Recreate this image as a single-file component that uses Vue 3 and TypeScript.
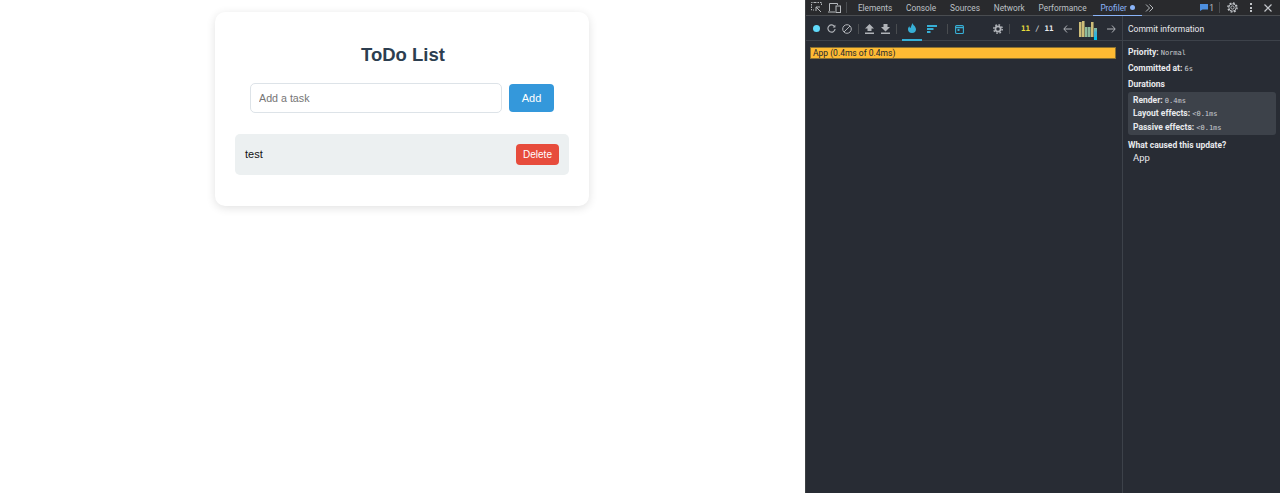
<script setup lang="ts">
const tabs: string[] = ['Elements', 'Console', 'Sources', 'Network', 'Performance']
const bars: { h: number; c: string }[] = [
  { h: 15, c: '#cdbd78' },
  { h: 16, c: '#cdbd78' },
  { h: 10, c: '#8dbb9c' },
  { h: 10, c: '#8dbb9c' },
  { h: 15, c: '#cdbd78' }
]
</script>

<template>
  <div class="page">
    <main class="app">
      <section class="card">
        <h1>ToDo List</h1>
        <div class="entry">
          <input class="task-input" type="text" placeholder="Add a task" />
          <button class="add">Add</button>
        </div>
        <ul class="list">
          <li class="item">
            <span class="label">test</span>
            <button class="delete">Delete</button>
          </li>
        </ul>
      </section>
    </main>

    <aside class="devtools">
      <header class="tabbar">
        <div class="tb-icons">
          <svg width="11" height="11" viewBox="0 0 11 11" fill="none" stroke="#b5b8bc" stroke-width="1">
            <path d="M4 .5H.5V8H3" stroke-dasharray="1.5 1" />
            <path d="M4 .5h6.5V4" stroke-dasharray="1.5 1" />
            <path d="M5 5l5 5M5 5v4M5 5h4" />
          </svg>
          <svg width="13" height="10" viewBox="0 0 13 10" fill="none" stroke="#b5b8bc" stroke-width="1">
            <path d="M1.5 8V.5h8V2M0 9h7" />
            <rect x="8" y="3" width="4.5" height="6.5" />
          </svg>
        </div>
        <i class="sep tall"></i>
        <nav class="tabs">
          <span v-for="t in tabs" :key="t" class="tab">{{ t }}</span>
          <span class="tab active">Profiler<b class="dot"></b></span>
        </nav>
        <svg class="more" width="9" height="8" viewBox="0 0 9 8" fill="none" stroke="#b5b8bc">
          <path d="M1 .5L4.500 4 1 7.500M4.500 .5L8 4 4.500 7.500" />
        </svg>
        <div class="tb-right">
          <span class="msg">
            <svg width="8" height="7" viewBox="0 0 8 7"><path d="M0 0h8v5.500H2.500L0 7z" fill="#4d8fe0" /></svg>
            <em>1</em>
          </span>
          <i class="sep tall"></i>
          <svg class="tgear" width="11" height="11" viewBox="0 0 12 12" fill="none" stroke="#c2c5c9">
            <circle cx="6" cy="6" r="1.800" stroke-width="1" />
            <circle cx="6" cy="6" r="4" stroke-width="1" />
            <circle cx="6" cy="6" r="5" stroke-width="1.500" stroke-dasharray="2 1.927" />
          </svg>
          <span class="kebab"><i></i><i></i><i></i></span>
          <svg width="8" height="8" viewBox="0 0 8 8" stroke="#c2c5c9" stroke-width="1.200"><path d="M.5.500l7 7M7.500.500l-7 7" /></svg>
        </div>
      </header>

      <div class="panes">
        <div class="left-pane">
          <div class="toolbar">
            <b class="record"></b>
            <svg class="ti" width="9" height="9" viewBox="0 0 10 10" fill="none" stroke="#b0b3b8" stroke-width="1.300">
              <path d="M8.500 3A4 4 0 1 0 9 5.500" />
              <path d="M9.300 .800v3h-3z" fill="#b0b3b8" stroke="none" />
            </svg>
            <svg class="ti clear" width="10" height="10" viewBox="0 0 10 10" fill="none" stroke="#b0b3b8" stroke-width="1">
              <circle cx="5" cy="5" r="4.300" /><path d="M2 8l6-6" />
            </svg>
            <i class="sep"></i>
            <svg class="ti" width="9" height="10" viewBox="0 0 9 10" fill="#b0b3b8"><path d="M4.500 0L9 4.500H6.500V7h-4V4.500H0zM0 8.500h9V10H0z" /></svg>
            <svg class="ti" width="9" height="10" viewBox="0 0 9 10" fill="#b0b3b8"><path d="M2.500 0h4v3H9L4.500 7.500 0 3h2.500zM0 8.500h9V10H0z" /></svg>
            <i class="sep"></i>
            <span class="mode on">
              <svg width="8" height="10" viewBox="0 0 8 10" fill="#37afd6"><path d="M4.500 0c.4 2 3.500 3.500 3.500 6.300A4 3.700 0 0 1 0 6.300C0 5 .7 4 1.500 3.300c0 1 .4 1.500 1 1.700C3.200 3.500 3.600 1.800 4.500 0z" /></svg>
            </span>
            <span class="mode">
              <svg width="10" height="8" viewBox="0 0 10 8" fill="#37afd6"><path d="M0 0h10v2H0zM0 3h6.500v2H0zM0 6h3.500v2H0z" /></svg>
            </span>
            <i class="sep"></i>
            <svg class="cal" width="9" height="10" viewBox="0 0 9 10" fill="none" stroke="#37afd6" stroke-width="1.100">
              <rect x=".6" y="1.500" width="7.800" height="8" rx="1" /><path d="M.6 3.500h7.800" stroke-width="1.500" /><rect x="2.500" y="5" width="2" height="2" fill="#37afd6" stroke="none" />
            </svg>
            <svg class="gear" width="10" height="10" viewBox="0 0 10 10" fill="none" stroke="#b0b3b8">
              <circle cx="5" cy="5" r="2.600" stroke-width="1.700" />
              <circle cx="5" cy="5" r="4.200" stroke-width="1.500" stroke-dasharray="1.650 1.649" />
            </svg>
            <i class="sep"></i>
            <span class="count"><b>11</b><em>/</em><strong>11</strong></span>
            <svg class="arrow left" width="9" height="8" viewBox="0 0 9 8" fill="none" stroke="#b0b3b8"><path d="M4 .5L.8 4 4 7.500M1 4h8" /></svg>
            <div class="chart">
              <i v-for="(b, n) in bars" :key="n" :style="{ height: b.h + 'px', background: b.c }"></i>
              <i class="current"></i>
            </div>
            <svg class="arrow" width="9" height="8" viewBox="0 0 9 8" fill="none" stroke="#b0b3b8"><path d="M5 .5L8.200 4 5 7.500M8 4H0" /></svg>
          </div>
          <div class="flame"><div class="bar">App (0.4ms of 0.4ms)</div></div>
        </div>

        <div class="right-pane">
          <div class="info-head">Commit information</div>
          <div class="info">
            <p class="row"><b>Priority:</b> <code>Normal</code></p>
            <p class="row"><b>Committed at:</b> <code>6s</code></p>
            <p class="row"><b>Durations</b></p>
            <div class="durations">
              <p><b>Render:</b> <code>0.4ms</code></p>
              <p><b>Layout effects:</b> <code>&lt;0.1ms</code></p>
              <p><b>Passive effects:</b> <code>&lt;0.1ms</code></p>
            </div>
            <p class="row cause"><b>What caused this update?</b></p>
            <p class="who">App</p>
          </div>
        </div>
      </div>
    </aside>
  </div>
</template>

<style>
html, body { margin: 0; background: #fff; overflow: hidden; }
</style>

<style scoped>
* { box-sizing: border-box; }
.page { display: flex; width: 1280px; height: 493px; font-family: "Liberation Sans", Arial, sans-serif; }

.app { width: 805px; flex: none; padding: 12px 1px 0 0; display: flex; justify-content: center; align-items: flex-start; }
.card { width: 374px; height: 194px; background: #fff; border-radius: 10px; box-shadow: 0 2px 10px rgba(0,0,0,.12); padding: 31px 20px 0; }
h1 { margin: 0; padding-left: 2px; color: #2c3e50; font-size: 18.500px; line-height: 24px; font-weight: 700; text-align: center; }
.entry { display: flex; align-items: center; margin: 16px 15px 0; gap: 7px; }
.task-input { width: 252px; height: 30px; border: 1.500px solid #dde3e8; border-radius: 5px; padding: 0 8px; font: 10.700px "Liberation Sans", Arial, sans-serif; outline: none; background: #fff; }
.task-input::placeholder { color: #757575; opacity: 1; }
.add { width: 45px; height: 28px; background: #3498db; color: #fff; border: 0; border-radius: 4px; font: 11px "Liberation Sans", Arial, sans-serif; padding: 0; }
.list { list-style: none; margin: 21px 0 0; padding: 0; }
.item { height: 41px; background: #ecf0f1; border-radius: 5px; display: flex; align-items: center; justify-content: space-between; padding: 0 10px; font-size: 11px; color: #111; }
.label { padding-bottom: 1px; }
.delete { width: 43px; height: 21px; background: #e74c3c; color: #fff; border: 0; border-radius: 4px; font: 10px "Liberation Sans", Arial, sans-serif; padding: 0; }

.devtools { flex: 1; display: flex; flex-direction: column; background: #282c34; border-left: 1px solid #3d4043; font-family: Roboto, "Noto Sans", sans-serif; font-size: 8.500px; color: #e8eaed; min-width: 0; }
.tabbar { height: 16px; flex: none; background: #292a2d; border-bottom: 1px solid #494c50; display: flex; align-items: center; padding-left: 5px; color: #bdc1c6; }
.tb-icons { display: flex; align-items: center; gap: 6px; }
.sep { width: 1px; height: 10px; background: #494c50; flex: none; display: block; }
.sep.tall { height: 11px; }
.tabbar > .sep { margin-left: 5px; }
.tabs { display: flex; height: 100%; margin-left: 4px; }
.tab { display: flex; align-items: center; padding: 0 6.900px; height: 16px; white-space: nowrap; font-size: 8.300px; }
.tab.active { color: #8ab4f8; border-bottom: 1.500px solid #8ab4f8; padding-right: 7px; }
.dot { width: 5px; height: 5px; border-radius: 50%; background: #8ab4f8; margin-left: 3px; }
.more { margin-left: 3px; }
.tb-right { margin-left: auto; display: flex; align-items: center; gap: 7px; padding-right: 8px; }
.msg { display: flex; align-items: center; gap: 1px; color: #b8bcc2; margin-right: -2px; }
.msg em { font-style: normal; }
.tgear { margin-right: 1px; }
.kebab { display: flex; flex-direction: column; gap: 1.500px; margin: 0 5px 0 4px; }
.kebab i { width: 2px; height: 2px; background: #c2c5c9; display: block; }

.panes { flex: 1; display: flex; min-height: 0; }
.left-pane { width: 317px; flex: none; border-right: 1px solid #3d424a; }
.toolbar { height: 25px; border-bottom: 1px solid #3d424a; display: flex; align-items: center; padding-left: 7px; padding-top: 1px; }
.record { width: 7px; height: 7px; border-radius: 50%; background: #61dafb; flex: none; }
.toolbar .ti { margin-left: 7px; flex: none; }
.toolbar .ti.clear { margin-left: 6px; }
.toolbar .sep { margin-left: 6px; }
.toolbar .sep + .ti { margin-left: 6px; }
.mode { width: 20px; height: 24px; display: flex; align-items: center; justify-content: center; flex: none; }
.mode.on { margin-left: 5px; border-bottom: 2px solid #37afd6; }
.mode + .mode { margin-left: 0; }
.toolbar .mode + .sep { margin-left: 5px; }
.cal { margin-left: 7px; flex: none; }
.gear { margin-left: 29px; flex: none; }
.count { display: flex; align-items: center; gap: 5px; margin-left: 11px; font: 700 7.500px "DejaVu Sans Mono", monospace; }
.count b { color: #e6dc3c; }
.count em { font-style: normal; color: #c5c8cc; }
.count strong { color: #e8eaed; }
.arrow { flex: none; }
.arrow.left { margin-left: 9px; }
.chart { display: flex; align-items: flex-end; height: 16px; margin: 1px 10px 0 7px; }
.chart i { width: 3px; display: block; border-right: 1px solid rgba(40,44,52,.45); background-clip: border-box; }
.chart .current { height: 12px; margin-bottom: -3px; border-right: 0; background: linear-gradient(#8dbb9c 0, #37afd6 40%, #37afd6 75%, #00c2ee 75%); }
.flame { padding: 6px 6px 6px 4px; }
.bar { height: 12px; background: #ffbb33; border: 1px solid #8a7132; color: #23272f; font-size: 8.500px; line-height: 10px; padding-left: 2px; white-space: nowrap; overflow: hidden; }

.right-pane { flex: 1; min-width: 0; }
.info-head { height: 25px; border-bottom: 1px solid #3d424a; display: flex; align-items: center; padding-left: 5px; padding-top: 1px; }
.info { padding: 5px 4px 0 5px; }
p { margin: 0; }
.row { line-height: 12px; margin-bottom: 4px; white-space: nowrap; }
b { font-weight: 700; }
code { font: 7px "DejaVu Sans Mono", monospace; color: #c9ccd1; }
.durations { background: #3d424a; border-radius: 3px; padding: 1.500px 5px 1px; margin-bottom: 4px; margin-top: -2px; width: 148px; }
.durations p { line-height: 13.500px; white-space: nowrap; }
.cause { margin-bottom: 1px; }
.who { padding-left: 5px; font-size: 9.500px; line-height: 12px; }
</style>
